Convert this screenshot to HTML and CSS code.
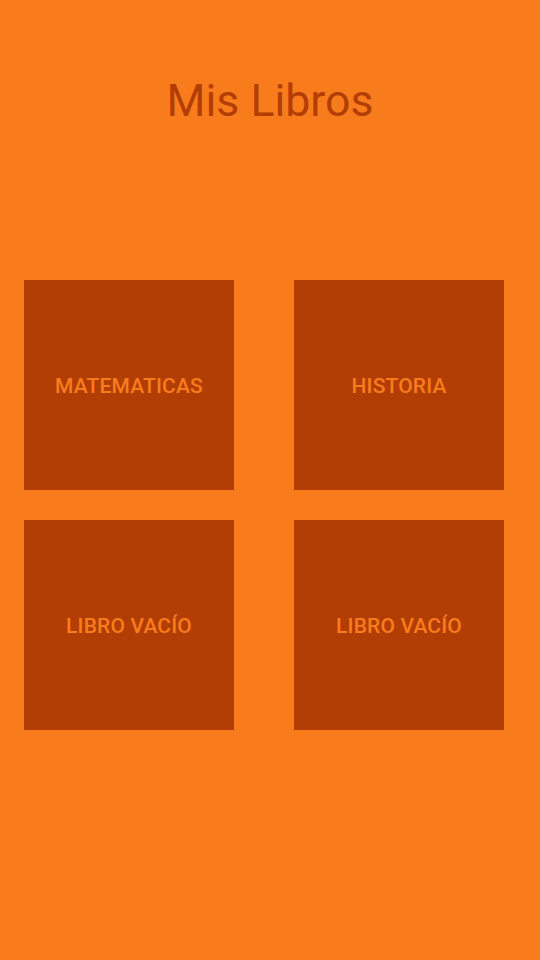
FILE: index.html
```html
<!DOCTYPE html>
<html lang="es">
<head>
<meta charset="utf-8">
<title>Mis Libros</title>
<link rel="stylesheet" href="styles.css">
</head>
<body>
<div class="screen">
  <h1 class="title">Mis Libros</h1>
  <div class="grid">
    <div class="book">MATEMATICAS</div>
    <div class="book">HISTORIA</div>
    <div class="book">LIBRO VACÍO</div>
    <div class="book">LIBRO VACÍO</div>
  </div>
</div>
</body>
</html>
```
FILE: styles.css
```css
html, body {
  margin: 0;
  padding: 0;
  background: #f97c1c;
}
.screen {
  width: 540px;
  height: 960px;
  font-family: Roboto, "Noto Sans", sans-serif;
}
.title {
  margin: 0;
  padding-top: 73px;
  height: 280px;
  box-sizing: border-box;
  text-align: center;
  font-size: 44.6px;
  font-weight: 400;
  line-height: 56px;
  color: #b33e05;
}
.grid {
  display: grid;
  grid-template-columns: 210px 210px;
  grid-auto-rows: 210px;
  column-gap: 60px;
  row-gap: 30px;
  padding-left: 24px;
}
.book {
  background: #b33e05;
  color: #f97c1c;
  display: flex;
  align-items: center;
  justify-content: center;
  padding-top: 2px;
  box-sizing: border-box;
  font-size: 21px;
  font-weight: 500;
  letter-spacing: 0.15px;
}
```
